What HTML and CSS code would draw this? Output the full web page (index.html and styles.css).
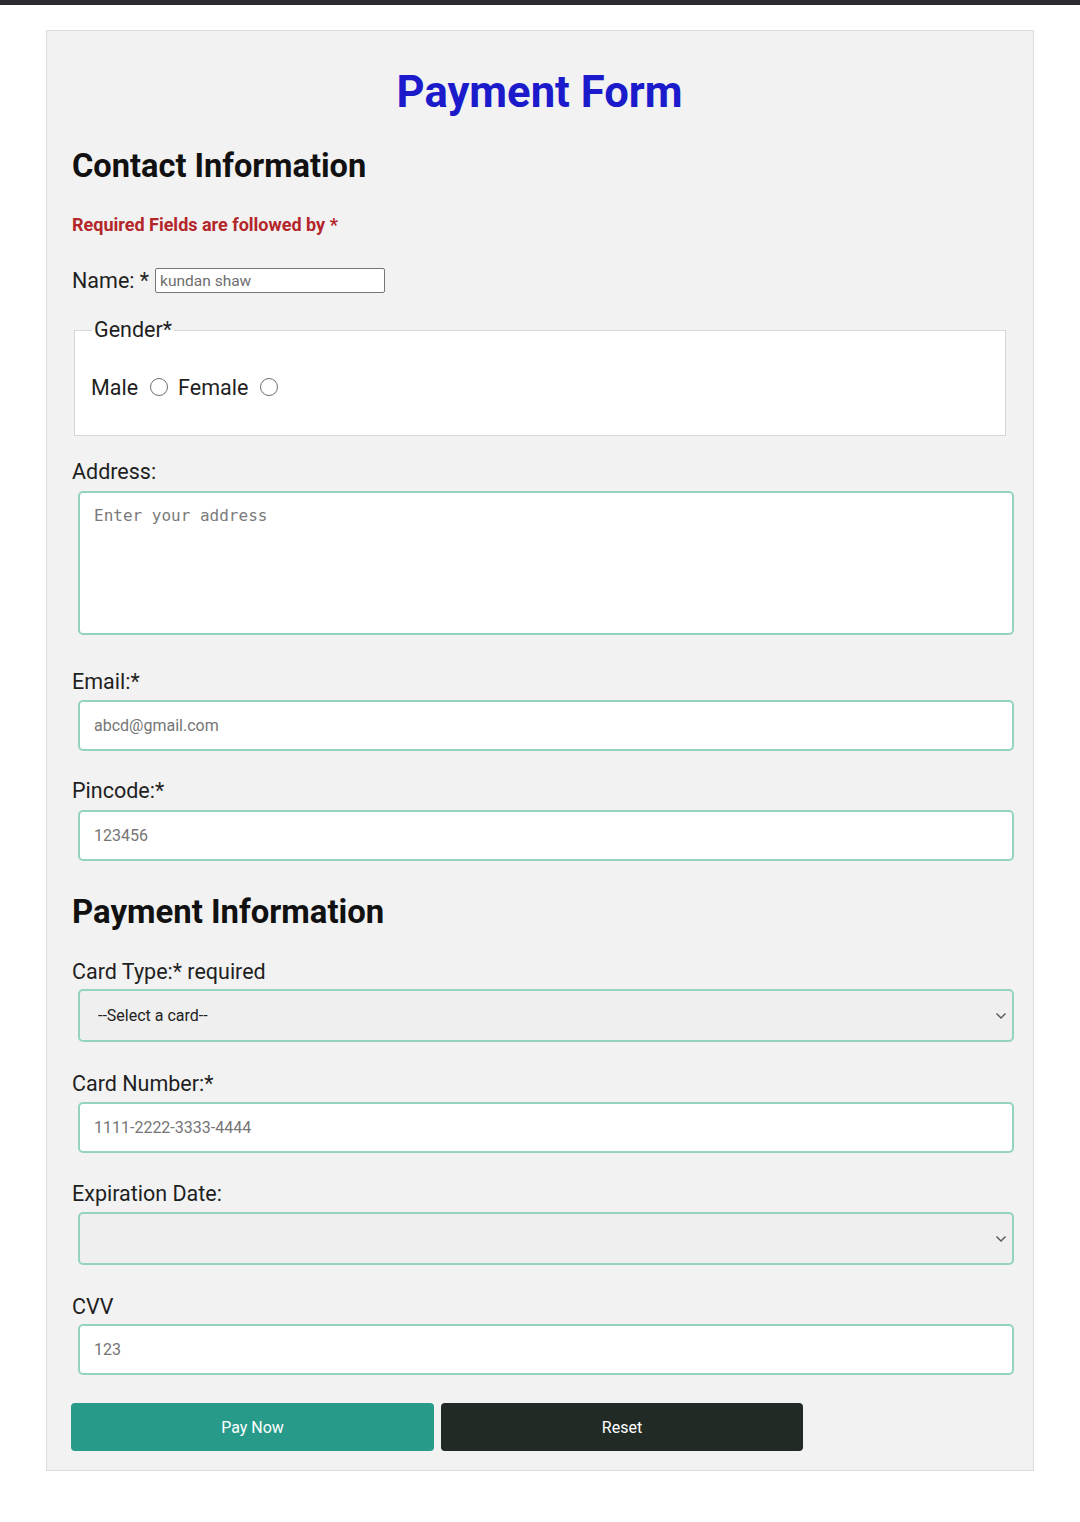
FILE: index.html
```html
<!DOCTYPE html>
<html>
<head>
<meta charset="utf-8">
<title>Payment Form</title>
<link rel="stylesheet" href="styles.css">
</head>
<body>
<div class="topbar"></div>
<form class="container">
  <h1 class="title">Payment Form</h1>
  <h2 class="section">Contact Information</h2>
  <p class="required">Required Fields are followed by *</p>
  <div class="name-row">
    <label class="lbl" for="name">Name: *</label>
    <input id="name" class="small-input" type="text" placeholder="kundan shaw">
  </div>
  <fieldset class="gender">
    <legend class="legend">Gender*</legend>
    <div class="radios">
      <span class="opt">Male</span><input class="radio" type="radio" name="g">
      <span class="opt">Female</span><input class="radio" type="radio" name="g">
    </div>
  </fieldset>
  <label class="lbl field-lbl first">Address:</label>
  <textarea class="field area" placeholder="Enter your address"></textarea>
  <label class="lbl field-lbl email">Email:*</label>
  <input class="field text t5" type="text" placeholder="abcd@gmail.com">
  <label class="lbl field-lbl pin">Pincode:*</label>
  <input class="field text" type="text" placeholder="123456">
  <h2 class="section pay">Payment Information</h2>
  <label class="lbl field-lbl">Card Type:* required</label>
  <select class="field sel">
    <option>--Select a card--</option>
  </select>
  <label class="lbl field-lbl cardnum">Card Number:*</label>
  <input class="field text t5" type="text" placeholder="1111-2222-3333-4444">
  <label class="lbl field-lbl">Expiration Date:</label>
  <select class="field sel sel2">
    <option></option>
  </select>
  <label class="lbl field-lbl cvv">CVV</label>
  <input class="field text t4" type="text" placeholder="123">
  <div class="buttons">
    <button type="button" class="btn pay-btn">Pay Now</button>
    <button type="reset" class="btn reset-btn">Reset</button>
  </div>
</form>
</body>
</html>
```

FILE: styles.css
```css
html, body {
  margin: 0;
  padding: 0;
  background: #ffffff;
  font-family: Roboto, "Liberation Sans", sans-serif;
}

.topbar {
  height: 5px;
  background: #2b2b31;
}

.container {
  display: block;
  box-sizing: border-box;
  width: 988px;
  margin: 25px 0 0 46px;
  padding: 37px 26px 19px 25px;
  background: #f2f2f2;
  border: 1px solid #dcdcdc;
  color: #1f1f1f;
}

.title {
  margin: 0;
  font-size: 43.6px;
  line-height: 50px;
  font-weight: 700;
  text-align: center;
  color: #1b1bcc;
}

.section {
  margin: 29px 0 0;
  font-size: 32.6px;
  line-height: 38px;
  font-weight: 700;
  color: #111;
}

.section.pay {
  margin-top: 32px;
  font-size: 32.9px;
}

.required {
  margin: 29px 0 0;
  font-size: 18px;
  line-height: 22px;
  font-weight: 700;
  color: #b3262a;
}

.lbl {
  font-size: 21.5px;
  line-height: 26px;
  color: #1f1f1f;
}

.name-row {
  display: flex;
  align-items: center;
  margin-top: 31px;
  height: 27px;
}

.small-input {
  box-sizing: border-box;
  width: 230px;
  height: 25px;
  margin: 0 0 0 6px;
  padding: 0 4px;
  border: 1px solid #767676;
  border-radius: 2px;
  background: #fff;
  font-family: Roboto, "Liberation Sans", sans-serif;
  font-size: 15.5px;
  color: #333;
}

.small-input::placeholder {
  color: #6e6e6e;
}

.gender {
  box-sizing: border-box;
  width: 932px;
  margin: 23px 0 0 2px;
  padding: 0 17px 34px 16px;
  border: 1px solid #d6d6d6;
  background: #ffffff;
}

.legend {
  padding: 0 2px;
  margin-left: 1px;
  font-size: 21.5px;
  line-height: 26px;
  color: #1f1f1f;
}

.radios {
  display: flex;
  align-items: center;
  margin-top: 32px;
  height: 26px;
}

.opt {
  font-size: 21.5px;
  line-height: 26px;
  color: #1f1f1f;
}

.radio {
  appearance: none;
  -webkit-appearance: none;
  box-sizing: border-box;
  width: 18px;
  height: 18px;
  margin: -2px 10px 0 12px;
  border: 1px solid #6f6f6f;
  border-radius: 50%;
  background: #fff;
}

.field-lbl {
  display: block;
  margin-top: 28px;
}

.field-lbl.first {
  margin-top: 23px;
}

.field-lbl.email {
  margin-top: 34px;
}

.field-lbl.pin {
  margin-top: 27px;
}

.field-lbl.cardnum {
  margin-top: 29px;
}

.field-lbl.cvv {
  margin-top: 29px;
}

.field {
  display: block;
  box-sizing: border-box;
  width: 936px;
  margin: 6px 0 0 6px;
  border: 2px solid #94d3bd;
  border-radius: 5px;
  background: #ffffff;
  color: #222;
  outline: none;
}

.area {
  height: 144px;
  margin-top: 6px;
  padding: 12px 14px;
  resize: none;
  font-family: "DejaVu Sans Mono", "Liberation Mono", monospace;
  font-size: 16px;
  line-height: 22px;
}

.area::placeholder {
  color: #7a7a7a;
}

.text {
  height: 51px;
  padding: 0 14px;
  font-family: Roboto, "Liberation Sans", sans-serif;
  font-size: 16px;
}

.text.t5 {
  margin-top: 5px;
}

.text.t4 {
  margin-top: 4px;
}

.text::placeholder {
  color: #757575;
}

.sel {
  appearance: none;
  -webkit-appearance: none;
  height: 53px;
  margin-top: 4px;
  padding: 0 18px;
  background-color: #efefef;
  background-image: url("data:image/svg+xml;utf8,<svg xmlns='http://www.w3.org/2000/svg' width='12' height='8' viewBox='0 0 12 8'><path d='M1.5 1.5 L6 6 L10.5 1.5' fill='none' stroke='%23555' stroke-width='1.4'/></svg>");
  background-repeat: no-repeat;
  background-position: right 5px center;
  font-family: Roboto, "Liberation Sans", sans-serif;
  font-size: 16px;
  color: #222;
}

.sel2 {
  margin-top: 5px;
}

.buttons {
  display: flex;
  gap: 7px;
  margin: 28px 0 0 -1px;
}

.btn {
  box-sizing: border-box;
  width: 363px;
  height: 48px;
  border: none;
  border-radius: 4px;
  color: #ffffff;
  font-family: Roboto, "Liberation Sans", sans-serif;
  font-size: 16px;
}

.pay-btn {
  background: #279a8a;
}

.reset-btn {
  width: 362px;
  background: #222a26;
}
```
